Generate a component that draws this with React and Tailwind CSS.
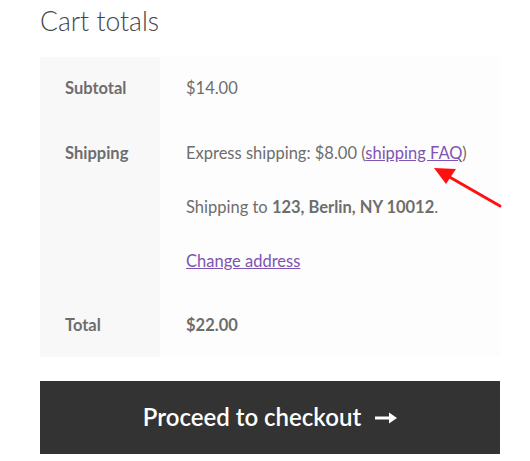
import React from 'react';

const rows = [
  { label: 'Subtotal', pad: 'pt-[18px] pb-[19px]' },
  { label: 'Shipping', pad: 'pt-[20px] pb-[19px]' },
  { label: 'Total', pad: 'pt-[19px] pb-[19px]' },
];

const App = () => {
  return (
    <div className="relative w-[530px] h-[461px] bg-white overflow-hidden font-['Lato',sans-serif] text-[#6d6d6d]">
      <div className="ml-[40px] w-[460px]">
        <h2 className="mt-[6px] text-[26.5px] leading-[1.2] font-light text-[#43454b]">Cart totals</h2>

        <table className="mt-[19px] w-full border-collapse text-[16.5px] leading-[26px]">
          <tbody>
            <tr>
              <th className={`w-[120px] bg-[#f8f8f8] pl-[25px] text-left align-top font-bold ${rows[0].pad}`}>Subtotal</th>
              <td className={`bg-[#fdfdfd] pl-[26px] align-top ${rows[0].pad}`}>$14.00</td>
            </tr>
            <tr>
              <th className={`bg-[#f8f8f8] pl-[25px] text-left align-top font-bold ${rows[1].pad}`}>Shipping</th>
              <td className={`bg-[#fdfdfd] pl-[26px] align-top ${rows[1].pad}`}>
                <div className="flex flex-col gap-[28px]">
                  <p>
                    Express shipping: $8.00 (
                    <a href="#" className="text-[#7f54b3] underline">shipping FAQ</a>)
                  </p>
                  <p>
                    Shipping to <strong className="font-bold">123, Berlin, NY 10012</strong>.
                  </p>
                  <p>
                    <a href="#" className="text-[#7f54b3] underline">Change address</a>
                  </p>
                </div>
              </td>
            </tr>
            <tr>
              <th className={`bg-[#f8f8f8] pl-[25px] text-left align-top font-bold ${rows[2].pad}`}>Total</th>
              <td className={`bg-[#fdfdfd] pl-[26px] align-top font-bold ${rows[2].pad}`}>$22.00</td>
            </tr>
          </tbody>
        </table>

        <button className="mt-[24px] flex h-[73px] w-full items-center justify-center gap-[14px] bg-[#333333] text-[24px] font-semibold text-white">
          <span>Proceed to checkout</span>
          <svg width="22" height="12" viewBox="0 0 22 12" className="mt-[1px]">
            <path d="M0 6 H16" stroke="white" strokeWidth="3" />
            <path d="M14 0.5 L22 6 L14 11.5 Z" fill="white" />
          </svg>
        </button>
      </div>

      <svg className="absolute left-0 top-0 pointer-events-none" width="530" height="461">
        <line x1="500" y1="206" x2="446" y2="175" stroke="#ff1010" strokeWidth="3" strokeLinecap="round" />
        <path d="M434 168 L456 169 L446 184 Z" fill="#ff1010" />
      </svg>
    </div>
  );
};

export default App;
